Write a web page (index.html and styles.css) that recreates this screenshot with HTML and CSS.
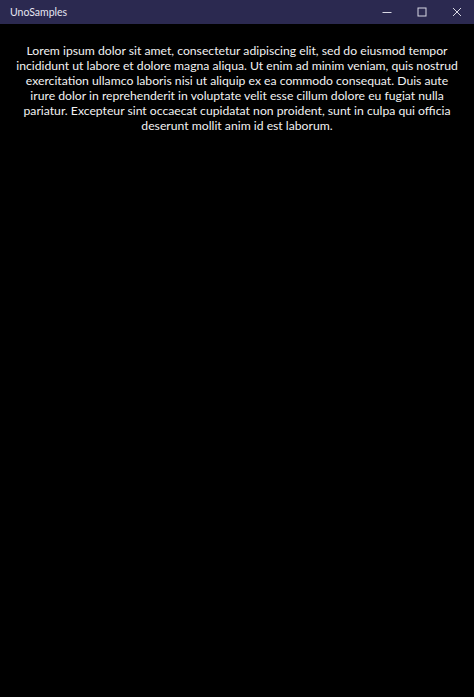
FILE: index.html
```html
<!DOCTYPE html>
<html>
<head>
<meta charset="utf-8">
<link rel="stylesheet" href="styles.css">
</head>
<body>
<div class="titlebar">
  <span class="title">UnoSamples</span>
  <div class="controls">
    <span class="btn"><svg width="10" height="10" viewBox="0 0 10 10"><path d="M0.5 5.5H9.5" stroke="#d8d8e4" stroke-width="1"/></svg></span>
    <span class="btn"><svg width="10" height="10" viewBox="0 0 10 10"><rect x="1" y="1" width="8" height="8" fill="none" stroke="#d8d8e4" stroke-width="1"/></svg></span>
    <span class="btn"><svg width="10" height="10" viewBox="0 0 10 10"><path d="M1 1L9 9M9 1L1 9" stroke="#d8d8e4" stroke-width="1"/></svg></span>
  </div>
</div>
<main class="content">
  <p class="lorem">Lorem ipsum dolor sit amet, consectetur adipiscing elit, sed do eiusmod tempor incididunt ut labore et dolore magna aliqua. Ut enim ad minim veniam, quis nostrud exercitation ullamco laboris nisi ut aliquip ex ea commodo consequat. Duis aute irure dolor in reprehenderit in voluptate velit esse cillum dolore eu fugiat nulla pariatur. Excepteur sint occaecat cupidatat non proident, sunt in culpa qui officia deserunt mollit anim id est laborum.</p>
</main>
</body>
</html>
```
FILE: styles.css
```css
html, body {
  margin: 0;
  padding: 0;
  height: 100%;
  background: #000;
}
body {
  font-family: "Lato", "Noto Sans", sans-serif;
  display: flex;
  flex-direction: column;
}
.titlebar {
  height: 24px;
  background: #2b2950;
  display: flex;
  align-items: center;
  justify-content: space-between;
  flex-shrink: 0;
}
.title {
  color: #e6e6f0;
  font-size: 10.5px;
  padding-left: 10px;
}
.controls {
  display: flex;
  height: 100%;
}
.btn {
  width: 35px;
  display: flex;
  align-items: center;
  justify-content: center;
}
.content {
  flex: 1;
  padding: 19px 12px 0;
}
.lorem {
  margin: 0;
  color: #f2f2f2;
  font-size: 12.2px;
  line-height: 15px;
  text-align: center;
}
```
